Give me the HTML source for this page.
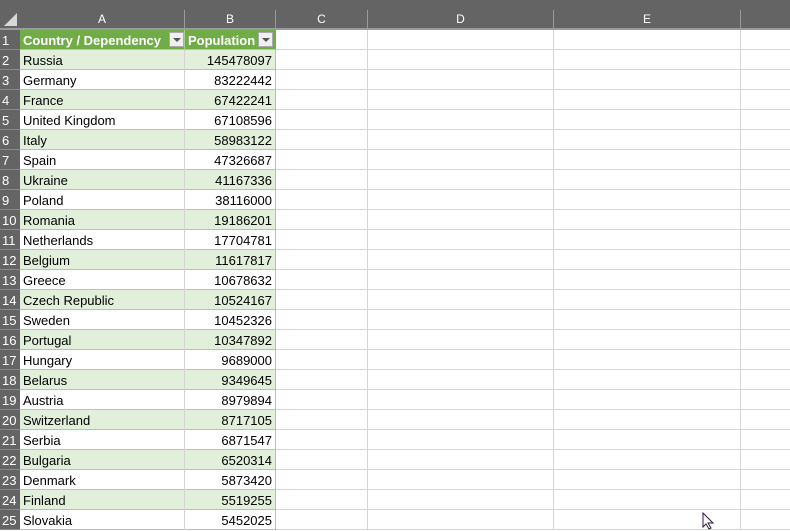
<!DOCTYPE html><html><head><style>
body{margin:0;width:790px;height:530px;overflow:hidden;background:#fff;font-family:"Liberation Sans",sans-serif;position:relative}
div{position:absolute;box-sizing:border-box}
.hd{background:#646464;left:0;top:0;width:790px;height:30px;border-bottom:2px solid #9a9a9a}
.ch{top:10px;height:19px;color:#fff;font-size:12px;text-align:center;line-height:19px;border-right:1px solid #9a9a9a}
.rh{left:0;width:20px;height:20px;background:#646464;color:#fff;font-size:13px;line-height:21px;text-align:left;padding-left:2px;border-bottom:1px solid #8a8a8a}
.gl{left:20px;width:770px;height:1px;background:#d4d4d4}
.vl{top:30px;width:1px;height:500px;background:#d4d4d4}
.c{height:20px;font-size:13px;line-height:21px;padding:0 3px;white-space:nowrap;overflow:hidden}
</style></head><body>
<div class="hd"></div>
<div style="left:4px;top:13px;width:0;height:0;border-left:13px solid transparent;border-bottom:13px solid #d8d8d8"></div>
<div class="ch" style="left:20px;width:165px">A</div>
<div class="ch" style="left:185px;width:91px">B</div>
<div class="ch" style="left:276px;width:92px">C</div>
<div class="ch" style="left:368px;width:186px">D</div>
<div class="ch" style="left:554px;width:187px">E</div>
<div class="vl" style="left:184px"></div><div class="vl" style="left:275px"></div><div class="vl" style="left:367px"></div><div class="vl" style="left:553px"></div><div class="vl" style="left:740px"></div>
<div id="g"></div>
<script>
var d=[["Russia",145478097],["Germany",83222442],["France",67422241],["United Kingdom",67108596],["Italy",58983122],["Spain",47326687],["Ukraine",41167336],["Poland",38116000],["Romania",19186201],["Netherlands",17704781],["Belgium",11617817],["Greece",10678632],["Czech Republic",10524167],["Sweden",10452326],["Portugal",10347892],["Hungary",9689000],["Belarus",9349645],["Austria",8979894],["Switzerland",8717105],["Serbia",6871547],["Bulgaria",6520314],["Denmark",5873420],["Finland",5519255],["Slovakia",5452025]];
var h='';
for(var i=1;i<=25;i++){var t=30+(i-1)*20;h+='<div class="rh" style="top:'+t+'px">'+i+'</div><div class="gl" style="top:'+(t+19)+'px"></div>';}
h+='<div class="c" style="left:20px;top:30px;width:256px;height:20px;background:#70ad47;border-bottom:1px solid #a9d08e"></div>';
h+='<div class="c" style="left:20px;top:30px;width:164px;color:#fff;font-weight:bold">Country / Dependency</div>';
h+='<div class="c" style="left:184px;top:30px;width:90px;color:#fff;font-weight:bold;border-left:1px solid #a9d08e">Population</div>';
[[169],[258]].forEach(function(x){h+='<div style="left:'+x[0]+'px;top:32px;width:15px;height:15px;background:#f0f0f0;border:1px solid #aaa"><div style="left:3px;top:5px;border-left:4px solid transparent;border-right:4px solid transparent;border-top:4px solid #555"></div></div>';});
for(var j=0;j<d.length;j++){var t=50+j*20,bg=j%2==0?'#e2efda':'#fff';
h+='<div style="left:20px;top:'+t+'px;width:256px;height:20px;background:'+bg+';border-bottom:1px solid #a9d08e;border-right:1px solid #a9d08e"></div>';
h+='<div class="c" style="left:20px;top:'+t+'px;width:164px">'+d[j][0]+'</div>';
h+='<div class="c" style="left:184px;top:'+t+'px;width:91px;text-align:right;border-left:1px solid #d4d4d4">'+d[j][1]+'</div>';}
document.getElementById('g').innerHTML=h;
</script>
<svg style="position:absolute;left:702px;top:512px" width="14" height="18"><path d="M1 1 L1 15 L4 12 L7 17 L9 16 L6 11 L11 11 Z" fill="#fff" stroke="#2a1a3a" stroke-width="1"/></svg>
</body></html>
